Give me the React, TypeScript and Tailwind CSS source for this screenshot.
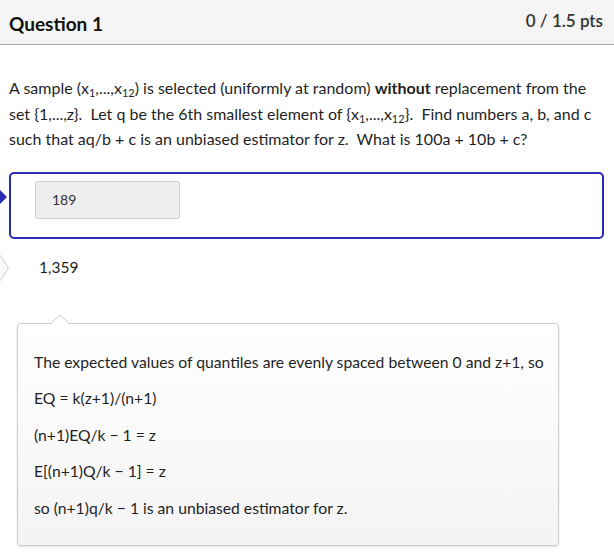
import React from 'react';

const Sub: React.FC<{ children: React.ReactNode }> = ({ children }) => (
  <span className="text-[11px] leading-none align-[-3px]">{children}</span>
);

const popLines = [
  'The expected values of quantiles are evenly spaced between 0 and z+1, so',
  'EQ = k(z+1)/(n+1)',
  '(n+1)EQ/k − 1 = z',
  'E[(n+1)Q/k − 1] = z',
  'so (n+1)q/k − 1 is an unbiased estimator for z.',
];

export default function App() {
  return (
    <div className="w-[614px] h-[554px] bg-white text-[#2d3b45] overflow-hidden" style={{ fontFamily: 'Lato, "Open Sans", sans-serif' }}>
      {/* header */}
      <div className="h-[45px] bg-[#f5f5f5] border-b border-[#a8a8a8] flex items-start justify-between pl-[9px] pr-[11px]">
        <h2 className="text-[19px] font-bold text-[#111] mt-[10px]">Question 1</h2>
        <span className="text-[17px] font-semibold text-[#333] mt-[8px]">0 / 1.5 pts</span>
      </div>

      {/* question, one block per rendered line */}
      <div className="px-[9px] pt-[30px] text-[16px] leading-[25.5px] text-[#1f1f1f] whitespace-nowrap">
        <div>
          A sample (x<Sub>1</Sub>,...,x<Sub>12</Sub>) is selected (uniformly at random) <b>without</b> replacement from the
        </div>
        <div>
          set {'{'}1,...,z{'}'}.&nbsp; Let q be the 6th smallest element of {'{'}x<Sub>1</Sub>,...,x<Sub>12</Sub>{'}'}.&nbsp; Find numbers a, b, and c
        </div>
        <div>such that aq/b + c is an unbiased estimator for z.&nbsp; What is 100a + 10b + c?</div>
      </div>

      {/* answers */}
      <div className="mt-[20px] relative">
        <div className="absolute left-0 top-[18px] w-0 h-0 border-y-[7px] border-y-transparent border-l-[7px] border-l-[#2a2ab0]" />
        <div className="ml-[9px] mr-[10px] h-[67px] border-2 border-[#2b2bb3] rounded-[5px] pl-[24px] pt-[7px]">
          <div className="w-[145px] h-[38px] bg-[#eeeeee] border border-[#cfcfcf] rounded-[3px] flex items-center pl-[16px] text-[14px] text-[#333]">
            189
          </div>
        </div>
      </div>

      <div className="relative mt-[11px] h-[36px] flex items-center pl-[39px] text-[15.5px] text-[#1f1f1f]">
        <svg className="absolute left-0 top-[4px]" width="10" height="28" viewBox="0 0 10 28">
          <path d="M0 1 L8.5 14 L0 27" fill="#fafafa" stroke="#d0d0d0" strokeWidth="1" />
        </svg>
        1,359
      </div>

      {/* popover */}
      <div className="relative ml-[17px] w-[542px] mt-[37px]">
        <svg className="absolute left-[33px] -top-[9px]" width="20" height="11" viewBox="0 0 20 11">
          <path d="M0 10.5 L10 1 L20 10.5" fill="#ffffff" stroke="#cccccc" strokeWidth="1" />
          <rect x="0.5" y="10" width="19" height="2" fill="#ffffff" />
        </svg>
        <div className="h-[223px] border border-[#cccccc] rounded-[4px] bg-gradient-to-b from-white to-[#f4f4f4] shadow-[0_1px_2px_rgba(0,0,0,0.12)] pl-[16px] pt-[27px] text-[15.7px] text-[#1f1f1f]">
          <div className="flex flex-col gap-[14.5px]">
            {popLines.map((l) => (
              <p key={l} className="leading-[22px] whitespace-nowrap">{l}</p>
            ))}
          </div>
        </div>
      </div>
    </div>
  );
}
